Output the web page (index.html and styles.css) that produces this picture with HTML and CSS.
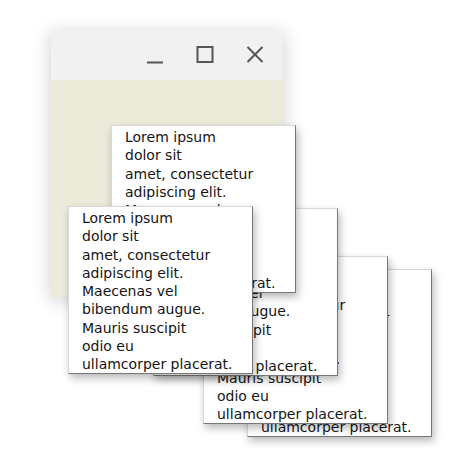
FILE: index.html
```html
<!DOCTYPE html>
<html lang="en">
<head>
    <meta charset="UTF-8">
    <title>Tooltips</title>
    <link rel="stylesheet" href="styles.css">
</head>
<body>
    <div class="desk">
        <!-- Main window -->
        <div class="window">
            <div class="titlebar">
                <svg class="ctl" viewBox="0 0 18 18"><path d="M1 16.5H17" /></svg>
                <svg class="ctl" viewBox="0 0 18 18"><rect x="1.5" y="1" width="15" height="15" /></svg>
                <svg class="ctl" viewBox="0 0 18 18"><path d="M1.5 1L16.5 16M16.5 1L1.5 16" /></svg>
            </div>
            <div class="client"></div>
        </div>

        <!-- Tooltips, bottom to top -->
        <div class="tip t5">Lorem ipsum<br>dolor sit<br>amet, consectetur<br>adipiscing elit.<br>Maecenas vel<br>bibendum augue.<br>Mauris suscipit<br>odio eu<br>ullamcorper placerat.</div>
        <div class="tip t4">Lorem ipsum<br>dolor sit<br>amet, consectetur<br>adipiscing elit.<br>Maecenas vel<br>bibendum augue.<br>Mauris suscipit<br>odio eu<br>ullamcorper placerat.</div>
        <div class="tip t3">Lorem ipsum<br>dolor sit<br>amet, consectetur<br>adipiscing elit.<br>Maecenas vel<br>bibendum augue.<br>Mauris suscipit<br>odio eu<br>ullamcorper placerat.</div>
        <div class="tip t1">Lorem ipsum<br>dolor sit<br>amet, consectetur<br>adipiscing elit.<br>Maecenas vel<br>bibendum augue.<br>Mauris suscipit<br>odio eu<br>ullamcorper placerat.</div>
        <div class="tip t2">Lorem ipsum<br>dolor sit<br>amet, consectetur<br>adipiscing elit.<br>Maecenas vel<br>bibendum augue.<br>Mauris suscipit<br>odio eu<br>ullamcorper placerat.</div>
    </div>
</body>
</html>
```
FILE: styles.css
```css
* { box-sizing: border-box; margin: 0; padding: 0; }
body { background: #fff; font-family: "DejaVu Sans", sans-serif; }

/* Desktop canvas */
.desk { position: relative; width: 474px; height: 471px; overflow: hidden; }

/* Window */
.window {
    position: absolute; left: 51px; top: 30px; width: 232px; height: 267px;
    display: flex; flex-direction: column;
    box-shadow: 0 3px 18px rgba(0, 0, 0, 0.2);
}
.titlebar {
    height: 50px; background: #f1f1f1;
    display: flex; justify-content: flex-end; align-items: center;
    gap: 32px; padding: 0 19px 0 0;
}
.ctl { width: 18px; height: 18px; fill: none; stroke: #555; stroke-width: 2; }
.client { flex: 1; background: #ecead9; }

/* Tooltips */
.tip {
    position: absolute; width: 185px; height: 168px;
    padding: 2px 0 0 13px;
    background: #fff; color: #151515;
    font-size: 14px; line-height: 18.3px; white-space: nowrap; overflow: hidden;
    border: 1px solid; border-color: #d8d8d8 #777 #777 #d8d8d8;
    box-shadow: 2px 4px 8px rgba(0, 0, 0, 0.28);
}
.t1 { left: 111px; top: 125px; }
.t2 { left: 68px; top: 206px; }
.t3 { left: 153px; top: 208px; }
.t4 { left: 203px; top: 256px; }
.t5 { left: 247px; top: 269px; }
```
